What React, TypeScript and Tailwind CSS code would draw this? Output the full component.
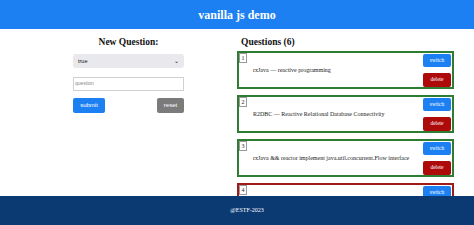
import React from "react";

type Question = { id: number; text: string; ok: boolean };

const questions: Question[] = [
  { id: 1, text: "rxJava — reactive programming", ok: true },
  { id: 2, text: "R2DBC — Reactive Relational Database Connectivity", ok: true },
  { id: 3, text: "rxJava && reactor implement java.util.concurrent.Flow interface", ok: true },
  { id: 4, text: "Project Reactor is a reactive library", ok: false },
];

function QuestionCard({ q }: { q: Question }) {
  return (
    <div
      className={
        "flex h-[38px] shrink-0 border-2 " +
        (q.ok ? "border-[#2e7d32]" : "border-[#a11a1a]")
      }
    >
      <div className="flex h-[10px] w-[8px] shrink-0 items-center justify-center border border-[#9a9a9a] bg-white text-[6px] leading-none text-[#222]">
        {q.id}
      </div>
      <div className="ml-[6px] flex-1 self-center text-[6px] text-[#222]">{q.text}</div>
      <div className="mr-[1px] flex flex-col gap-[6px] pt-[1px]">
        <button className="h-[13px] w-[28px] rounded-[2px] bg-[#1c7ff2] text-[5.5px] leading-none text-white">
          switch
        </button>
        <button className="h-[14px] w-[28px] rounded-[2px] bg-[#ad0a0a] text-[5.5px] leading-none text-white">
          delete
        </button>
      </div>
    </div>
  );
}

export default function App() {
  return (
    <div
      className="flex h-[225px] w-[474px] flex-col overflow-hidden bg-white"
      style={{ fontFamily: '"Liberation Serif", serif' }}
    >
      <header className="flex h-[29px] shrink-0 items-center justify-center bg-[#1c7ff2]">
        <h1 className="text-[12px] font-bold text-white">vanilla js demo</h1>
      </header>

      <main className="grid flex-1 grid-cols-2 overflow-hidden px-[20px] pt-[7px]">
        <section className="flex flex-col items-center">
          <h2 className="text-[9.5px] font-bold leading-[12px] text-[#111]">New Question:</h2>
          <div
            className="mt-[6px] flex w-[111px] flex-col"
            style={{ fontFamily: '"Liberation Sans", sans-serif' }}
          >
            <div className="flex h-[14px] items-center justify-between rounded-[3px] bg-[#e9e9ed] px-[5px] text-[5.5px] text-[#111]">
              <span>true</span>
              <span className="text-[6px]">⌄</span>
            </div>
            <div className="mt-[9px] flex h-[14px] items-center border border-[#d0d0d0] bg-white px-[1px] text-[5px] text-[#888]">
              question
            </div>
            <div className="mt-[7px] flex justify-between">
              <button className="h-[15px] w-[32px] rounded-[2px] bg-[#1c7ff2] text-[6px] text-white">
                submit
              </button>
              <button className="h-[15px] w-[27px] rounded-[2px] bg-[#7b7b7b] text-[6px] text-white">
                reset
              </button>
            </div>
          </div>
        </section>

        <section className="flex flex-col overflow-hidden">
          <h2 className="pl-[4px] text-[9.5px] font-bold leading-[12px] text-[#111]">
            Questions (6)
          </h2>
          <div className="mt-[3px] flex flex-col gap-[6px]">
            {questions.map((q) => (
              <QuestionCard key={q.id} q={q} />
            ))}
          </div>
        </section>
      </main>

      <footer className="flex h-[29px] shrink-0 items-center justify-center bg-[#0b3a73] pl-[20px]">
        <span className="text-[6px] text-white">@ESTF-2023</span>
      </footer>
    </div>
  );
}
